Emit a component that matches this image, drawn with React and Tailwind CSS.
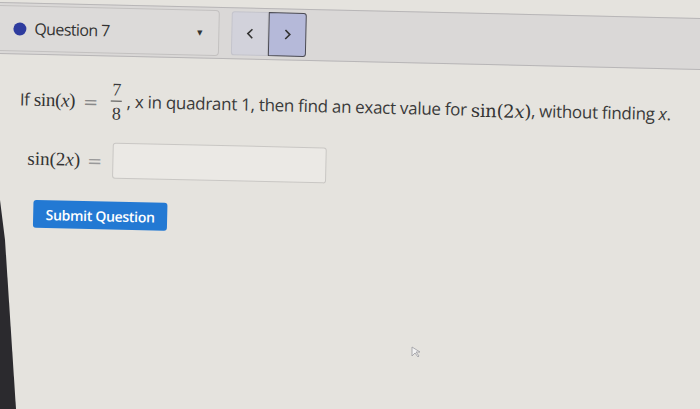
import React from 'react';

function Frac({ num, den }) {
  return (
    <span className="inline-flex flex-col items-center align-middle mx-[4px] leading-none" style={{ fontFamily: '"Liberation Serif", "DejaVu Serif", serif' }}>
      <span className="text-[18px] px-[2px] pb-[2px]">{num}</span>
      <span className="w-[11px] h-px bg-[#444]" />
      <span className="text-[18px] px-[2px] pt-[3px]">{den}</span>
    </span>
  );
}

function M({ children, wide }) {
  return (
    <span
      className={wide ? 'text-[18px] text-[#333]' : 'text-[19px] text-[#333]'}
      style={{ fontFamily: wide ? '"DejaVu Serif", "Liberation Serif", serif' : '"Liberation Serif", "DejaVu Serif", serif' }}
    >
      {children}
    </span>
  );
}

export default function App() {
  return (
    <div className="relative w-[700px] h-[409px] overflow-hidden bg-[#e5e3de] text-[#3a3a3a]" style={{ fontFamily: '"Open Sans", "Noto Sans", sans-serif' }}>
      <div className="origin-top-left rotate-[1.3deg] w-[720px]">
        <div className="mt-[2px] h-[52px] border-y border-[#b8b6b7] bg-[#dad8d7] flex items-center gap-[12px]">
          <div className="-ml-[4px] w-[224px] h-[46px] border border-[#c3c1c0] rounded-[4px] bg-[#dcdad9] flex items-center pl-[17px] pr-[14px]">
            <span className="w-[13px] h-[13px] rounded-full bg-[#2e3b9e]" />
            <span className="ml-[8px] text-[16px] tracking-[-0.6px] text-[#333]">Question 7</span>
            <span className="ml-auto text-[9px] text-[#333]">▼</span>
          </div>
          <div className="flex">
            <button className="w-[37px] h-[44px] border border-[#c4c4cc] bg-[#d2d2db] rounded-l-[3px] flex items-center justify-center text-[#333]">
              <svg width="10" height="12" viewBox="0 0 10 12" fill="none" stroke="#333" strokeWidth="1.6"><path d="M7 1.5 L2.5 6 L7 10.5" /></svg>
            </button>
            <button className="w-[38px] h-[44px] border-[1.5px] border-[#4a4a52] bg-[#b5b9d9] rounded-r-[3px] flex items-center justify-center">
              <svg width="10" height="12" viewBox="0 0 10 12" fill="none" stroke="#333" strokeWidth="1.6"><path d="M3 1.5 L7.5 6 L3 10.5" /></svg>
            </button>
          </div>
        </div>

        <div className="pl-[22px] mt-[23px] text-[17px] text-[#3a3a3a] tracking-[-0.3px] flex items-center h-[44px]">
          <span>If&nbsp;</span>
          <M>sin(<i>x</i>)</M>
          <span className="mx-[8px] text-[18px] text-[#888]" style={{ fontFamily: '"DejaVu Serif", serif' }}>=</span>
          <Frac num="7" den="8" />
          <span>, x in quadrant 1, then find an exact value for&nbsp;</span>
          <M wide>sin(2<i>x</i>)</M>
          <span>, without finding <i>x</i>.</span>
        </div>

        <div className="pl-[31px] mt-[19px] flex items-center">
          <M>sin(2<i>x</i>)</M>
          <span className="ml-[7px] text-[18px] text-[#999]" style={{ fontFamily: '"DejaVu Serif", serif' }}>=</span>
          <div className="ml-[10px] w-[214px] h-[36px] border border-[#c9c7c4] rounded-[3px] bg-[#ebe9e5]" />
        </div>

        <div className="pl-[38px] mt-[23px]">
          <button className="w-[134px] h-[28px] rounded-[3px] bg-[#2379d3] text-white text-[14px] font-semibold tracking-[-0.3px]">
            Submit Question
          </button>
        </div>
      </div>

      <svg className="absolute left-0 top-0" width="700" height="409" viewBox="0 0 700 409">
        <polygon points="0,200 5,240 16,409 0,409" fill="#2b2a2e" />
        <path d="M412 347 L412 356 L415 353 L418 357 L419 356 L416 352 L420 352 Z" fill="#f2f2f2" stroke="#9a9aa0" strokeWidth="0.8" />
      </svg>
    </div>
  );
}
